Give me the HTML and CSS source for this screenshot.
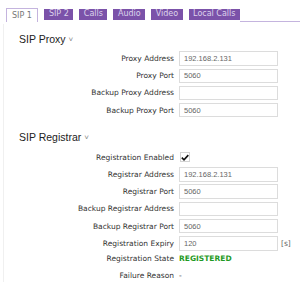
FILE: index.html
```html
<!DOCTYPE html>
<html lang="en">
<head>
  <meta charset="UTF-8" />
  <title>SIP 1</title>
  <link rel="stylesheet" href="styles.css">
</head>
<body>
  <!-- Abas -->
  <div class="tabs">
    <span class="tab active">SIP 1</span>
    <span class="tab">SIP 2</span>
    <span class="tab">Calls</span>
    <span class="tab">Audio</span>
    <span class="tab">Video</span>
    <span class="tab">Local Calls</span>
    <span class="tab-fill"></span>
  </div>

  <div class="panel">
    <h2 class="section-title">SIP Proxy <span class="chevron">&#709;</span></h2>
    <div class="form">
      <div class="row"><label>Proxy Address</label><input type="text" value="192.168.2.131"></div>
      <div class="row"><label>Proxy Port</label><input type="text" value="5060"></div>
      <div class="row"><label>Backup Proxy Address</label><input type="text" value=""></div>
      <div class="row"><label>Backup Proxy Port</label><input type="text" value="5060"></div>
    </div>

    <h2 class="section-title registrar">SIP Registrar <span class="chevron">&#709;</span></h2>
    <div class="form">
      <div class="row">
        <label>Registration Enabled</label>
        <span class="check">
          <svg width="8" height="7" viewBox="0 0 8 7"><path d="M0.8 3.6 L3 5.8 L7.3 1.1" fill="none" stroke="#111" stroke-width="1.6"/></svg>
        </span>
      </div>
      <div class="row"><label>Registrar Address</label><input type="text" value="192.168.2.131"></div>
      <div class="row"><label>Registrar Port</label><input type="text" value="5060"></div>
      <div class="row"><label>Backup Registrar Address</label><input type="text" value=""></div>
      <div class="row"><label>Backup Registrar Port</label><input type="text" value="5060"></div>
      <div class="row"><label>Registration Expiry</label><input type="text" value="120"><span class="unit">[s]</span></div>
      <div class="row state"><label>Registration State</label><span class="registered">REGISTERED</span></div>
      <div class="row reason"><label>Failure Reason</label><span class="value">-</span></div>
    </div>
  </div>
</body>
</html>
```

FILE: styles.css
```css
* {
  margin: 0;
  padding: 0;
  box-sizing: border-box;
}

body {
  font-family: "DejaVu Sans", sans-serif;
  font-size: 7.5px;
  color: #333;
  background: #fff;
  overflow: hidden;
}

/* abas */
.tabs {
  display: flex;
  align-items: flex-end;
  height: 22px;
  padding-left: 6px;
}

.tab {
  height: 10.5px;
  line-height: 10.5px;
  padding: 0 4.5px;
  margin: 0 0 2.5px 6px;
  font-size: 8px;
  background: #7b52a9;
  color: #ddd2ec;
}

.tab.active {
  height: 14px;
  line-height: 13px;
  margin: 0;
  padding: 0 5px;
  background: #fff;
  color: #777;
  border: 1px solid #c4b4de;
  border-bottom: none;
}

.tab.active + .tab {
  margin-left: 6.5px;
}

.tab-fill {
  flex: 1;
  border-bottom: 1px solid #c4b4de;
}

/* conteudo */
.panel {
  margin: 2px 0 0 3px;
  border-left: 1px solid #f0f0f0;
  height: 258px;
}

.section-title {
  font-family: "Liberation Sans", Arial, sans-serif;
  font-weight: normal;
  font-size: 10.5px;
  color: #222;
  padding: 9px 0 0 15px;
  height: 26px;
}

.section-title.registrar {
  padding-top: 12px;
  height: 30px;
}

.chevron {
  font-size: 8px;
  color: #888;
  vertical-align: 1px;
}

.row {
  display: flex;
  align-items: center;
  height: 17.2px;
}

.row label {
  width: 175px;
  text-align: right;
  padding-right: 5px;
  color: #333;
}

.row input {
  width: 99px;
  height: 14.5px;
  border: 1px solid #dcdcdc;
  padding: 0 4px;
  font-family: "Liberation Sans", Arial, sans-serif;
  font-size: 7.5px;
  color: #666;
  outline: none;
}

.check {
  width: 10px;
  height: 10px;
  border: 1px solid #d4d4d4;
  display: flex;
  justify-content: center;
  align-items: center;
  margin-left: 0.5px;
}

.unit {
  margin-left: 3px;
  color: #666;
}

.row.state {
  height: 13px;
}

.row.reason {
  height: 21px;
}

.registered {
  color: #1f9a24;
  font-weight: bold;
}

.value {
  color: #333;
}
```
